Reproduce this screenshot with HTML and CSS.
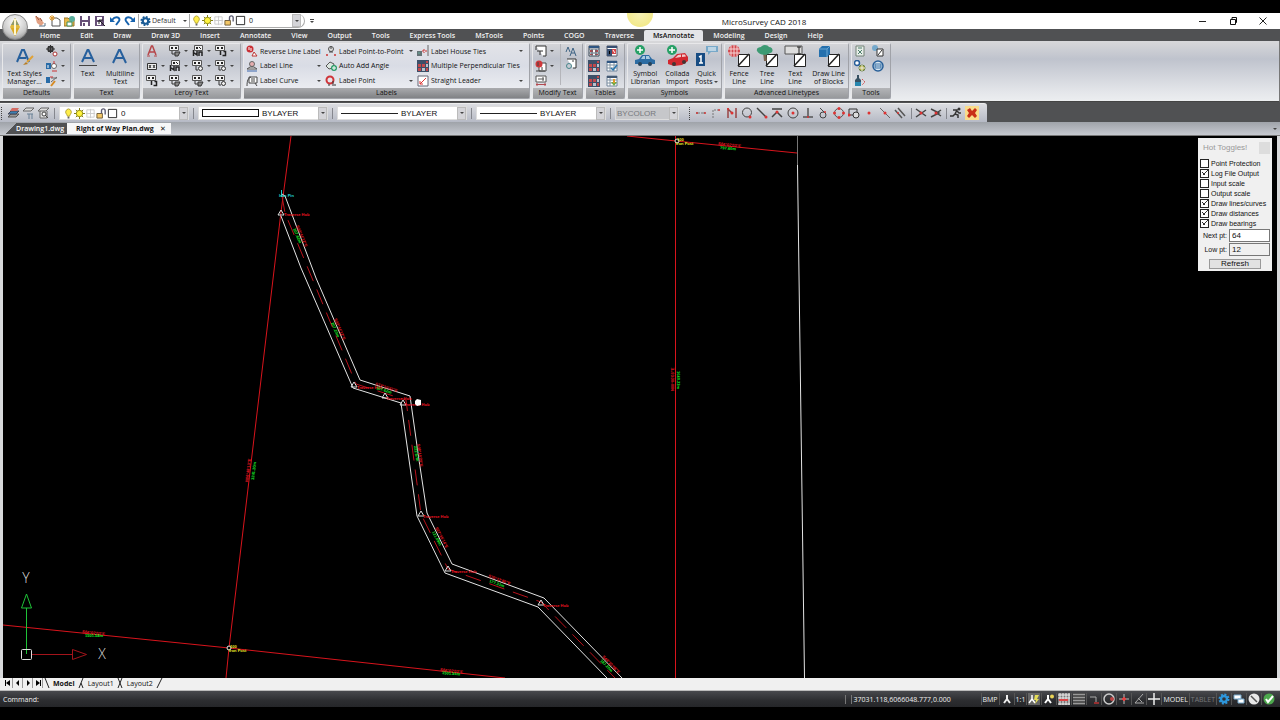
FILE: index.html
```html
<!DOCTYPE html>
<html lang="en">
<head>
  <meta charset="UTF-8" />
  <meta name="viewport" content="width=device-width, initial-scale=1.0"/>
  <title>MicroSurvey CAD 2018</title>
  <link rel="stylesheet" href="styles.css">
</head>
<body>
  <!-- Icon sprite -->
  <svg class="sprite" width="0" height="0">
    <symbol id="hand" viewBox="0 0 12 12"><path d="M1 1l5 2 4 5-3 3-4-3z" fill="#e2a184"/><path d="M2 1l3 4M6 3l2 3" stroke="#9c543b" fill="none"/><path d="M5 11h6V8" stroke="#5a7286" fill="none"/></symbol>
    <symbol id="new" viewBox="0 0 12 12"><path d="M3 3h5l3 2v6H3z" fill="#fff" stroke="#555"/><path d="M0 3h6M3 0v6M1 1l4 4M5 1L1 5" stroke="#e09a2b"/></symbol>
    <symbol id="open" viewBox="0 0 12 12"><path d="M0 3h4l1 1h5v7H0z" fill="#e8b94a" stroke="#98742b"/><circle cx="8" cy="4" r="3" fill="#58ad9b"/><path d="M3 7h5v4H3z" fill="#fff" stroke="#3c8e60"/></symbol>
    <symbol id="save" viewBox="0 0 12 12"><path d="M1 1h10v10H1z" fill="#675078"/><path d="M3 1h6v4H3zM3 7h6v4H3z" fill="#fff"/><path d="M4 8h2v3H4z" fill="#675078"/></symbol>
    <symbol id="saveas" viewBox="0 0 12 12"><path d="M1 1h9v10H1z" fill="#675078"/><path d="M3 2h5v3H3zM3 7h4v3H3z" fill="#fff"/><path d="M5 5l6 6M5 5v4M5 5h4" stroke="#222"/></symbol>
    <symbol id="undo" viewBox="0 0 12 12"><path d="M1 2v5h5z" fill="#1763ae"/><path d="M3 5c4-5 9-2 7 1L7 10" fill="none" stroke="#1763ae" stroke-width="2"/></symbol>
    <symbol id="redo" viewBox="0 0 12 12"><path d="M11 2v5H6z" fill="#1763ae"/><path d="M9 5C5 0 0 3 2 6l3 4" fill="none" stroke="#1763ae" stroke-width="2"/></symbol>
    <symbol id="gear" viewBox="0 0 12 12"><circle cx="6" cy="6" r="4.5" fill="none" stroke="currentColor" stroke-width="2" stroke-dasharray="2 1.5"/><circle cx="6" cy="6" r="3" fill="none" stroke="currentColor" stroke-width="2.4"/></symbol>
    <symbol id="bulb" viewBox="0 0 12 12"><path d="M6 1a3.5 3.5 0 0 0-2 6l1 2h2l1-2a3.5 3.5 0 0 0-2-6z" fill="#ffee4a" stroke="#b0a030"/><path d="M5 9.5h2v2H5z" fill="#666"/></symbol>
    <symbol id="sun" viewBox="0 0 12 12"><path d="M6 0v12M0 6h12M2 2l8 8M10 2l-8 8" stroke="#77740a"/><circle cx="6" cy="6" r="3.5" fill="#fff33d" stroke="#88830e"/></symbol>
    <symbol id="freeze" viewBox="0 0 12 12"><path d="M2 2h8v8H2zM6 1v10M1 6h10" fill="none" stroke="#ccc"/></symbol>
    <symbol id="lock" viewBox="0 0 12 12"><path d="M1 6h6v5H1z" fill="#f3c767" stroke="#6c5a35"/><path d="M6 6V3a2 2 0 0 1 4 0v4" fill="none" stroke="#5c5c72" stroke-width="1.5"/></symbol>
    <symbol id="box" viewBox="0 0 12 12"><path d="M1.5 1.5h9v9h-9z" fill="#fff" stroke="#222"/></symbol>

    <symbol id="bigA" viewBox="0 0 18 18"><path d="M2 15L8 2h1l6 13M5 10h7" fill="none" stroke="#27609d" stroke-width="2"/></symbol>
    <symbol id="bigAu" viewBox="0 0 18 18"><path d="M3 14L8.5 2h1L15 14M5 10h8" fill="none" stroke="#27609d" stroke-width="2"/><path d="M0 17.5h18" stroke="#444"/></symbol>
    <symbol id="styleA" viewBox="0 0 18 18"><path d="M1 14L6 2h2l5 12M3 10h7" fill="none" stroke="#27609d" stroke-width="2"/><path d="M17 8l-6 6" stroke="#e1a235" stroke-width="2"/><path d="M7 17l3-3 2 2z" fill="#b67c25"/></symbol>
    <symbol id="redA" viewBox="0 0 12 12"><path d="M2 10L5.5 1h1L10 10M3 7h6" fill="none" stroke="#b64649" stroke-width="1.5"/><path d="M1 11h3M8 11h3" stroke="#b64649"/></symbol>
    <symbol id="gearTag" viewBox="0 0 12 12"><circle cx="4.500" cy="4" r="2.5" fill="none" stroke="#333" stroke-width="1.5"/><path d="M4.5 0v8M0 4h9M2 1l5 6M7 1L2 7" stroke="#333"/><circle cx="9" cy="9" r="2" fill="#fff" stroke="#a33"/></symbol>
    <symbol id="tagLabel" viewBox="0 0 12 12"><path d="M0 3h5v6H0z" fill="#286ba7"/><path d="M2 5v3" stroke="#fff"/><circle cx="8" cy="6" r="2.5" fill="#fff" stroke="#666"/><path d="M8 1v3M6 11h5" stroke="#c33"/></symbol>
    <symbol id="tagLeader" viewBox="0 0 12 12"><path d="M0 2h4v6H0z" fill="#286ba7"/><path d="M5 3h6M5 7l6-5" stroke="#666"/><path d="M5 11l4-5" stroke="#d68a22" stroke-width="2"/><path d="M4 2h3" stroke="#c33"/></symbol>
    <symbol id="strip" viewBox="0 0 12 12"><path d="M1.500 3.500h9v6h-9z" fill="#eee" stroke="#333"/><path d="M3 5l2 3M5 5L3 8M7 5l2 3M9 5L7 8" fill="none" stroke="#333"/></symbol>
    <!-- lettering templates -->
    <symbol id="leroyA" viewBox="0 0 12 12"><path d="M.5.5h9v5h-9z" fill="#f2f2f2" stroke="#555"/><path d="M2 2l2 2M4 2L2 4M6 2l2 2M8 2L6 4" stroke="#222"/><path d="M3 6v3h3" fill="none" stroke="#333"/><path d="M6 7h5l-2 4H6z" fill="#888" stroke="#333"/></symbol>
    <symbol id="leroyB" viewBox="0 0 12 12"><path d="M2.500.5h8v5h-8z" fill="#f2f2f2" stroke="#555"/><path d="M4 2l2 2M6 2L4 4M7 2l2 2" stroke="#222"/><path d="M1.500 11V5M1 7l4 3V6M7 11V7h3v4" fill="none" stroke="#222" stroke-width="1.5"/></symbol>
    <symbol id="leroyC" viewBox="0 0 12 12"><path d="M.5.5h9v5h-9z" fill="#f2f2f2" stroke="#555"/><path d="M2 2l2 2M4 2L2 4M6 2l2 2M8 2L6 4" stroke="#222"/><path d="M4 6v4h2" fill="none" stroke="#333"/><circle cx="8.500" cy="8.500" r="2" fill="#eee" stroke="#333"/></symbol>
    <symbol id="leroyD" viewBox="0 0 12 12"><path d="M.5.5h9v5h-9z" fill="#f2f2f2" stroke="#555"/><path d="M2 2l2 2M4 2L2 4M6 2l2 2M8 2L6 4" stroke="#222"/><path d="M5.500 6v4M8.500 6.500h2v4h-3" fill="none" stroke="#222" stroke-width="1.5"/></symbol>

    <symbol id="revLabel" viewBox="0 0 12 12"><circle cx="4" cy="4" r="3.5" fill="#c92f35"/><path d="M3 2v3M5 3v3" stroke="#fff"/><path d="M8 7l3 4H6z" fill="#fff" stroke="#b33"/></symbol>
    <symbol id="lineLabel" viewBox="0 0 12 12"><circle cx="6" cy="4" r="2.5" fill="#e6aeb0" stroke="#666"/><path d="M1 9l3-2h4l3 2z" fill="#eee" stroke="#555"/><path d="M1 11h10" stroke="#3f69ad"/></symbol>
    <symbol id="curveLabel" viewBox="0 0 12 12"><path d="M3 2h8v6H3z" fill="#fff" stroke="#444"/><path d="M1 11c0-5 1-8 4-9M9 8l2 3M5 4h4M5 6h4" fill="none" stroke="#444"/></symbol>
    <symbol id="p2p" viewBox="0 0 12 12"><circle cx="6" cy="4" r="2.5" fill="#ddd" stroke="#555"/><path d="M6 1v3M4 7h4" stroke="#444"/><circle cx="2" cy="10" r="1" fill="#c33"/><circle cx="10" cy="10" r="1" fill="#c33"/></symbol>
    <symbol id="autoAngle" viewBox="0 0 12 12"><path d="M1 6l4-4 4 2-1 4-4 1z" fill="#dce7e1" stroke="#555"/><circle cx="9" cy="8" r="3" fill="#2a9c68"/><path d="M7 8h4M9 6v4" stroke="#fff"/></symbol>
    <symbol id="labelPoint" viewBox="0 0 12 12"><circle cx="5" cy="5" r="3.5" fill="none" stroke="#cf3439" stroke-width="2"/><path d="M8 6v5M3 10h2M10 9v2" stroke="#333"/></symbol>
    <symbol id="house" viewBox="0 0 12 12"><path d="M0 6h5v5H0z" fill="#657476"/><path d="M1 8h2" stroke="#62a998"/><path d="M5 6h5M7 4v4" stroke="#c33" stroke-dasharray="2 1"/><path d="M11 0v11" stroke="#666"/></symbol>
    <symbol id="grid" viewBox="0 0 12 12"><path d="M1 1h10v10H1z" fill="#fff" stroke="#384654"/><path d="M1 2h10" stroke="#2e5582" stroke-width="2"/><path d="M2 5h3v2H2zM7 5h3v2H7zM2 9h3v1H2zM7 9h3v1H7z" fill="#b8464a"/><path d="M1 4h10M1 8h10M4 4v7M8 4v7" stroke="#576472"/></symbol>
    <symbol id="gridFull" viewBox="0 0 12 12"><path d="M0 0h12v12H0z" fill="#3c4f68"/><path d="M1 4h3v3H1zM5 4h3v3H5zM9 8h2v3H9zM1 8h3v3H1zM9 1h2v2H9z" fill="#c2484c"/><path d="M5 8h3v3H5zM9 4h2v3H9z" fill="#b9c1cb"/></symbol>
    <symbol id="gridBlue" viewBox="0 0 12 12"><path d="M1 1h10v10H1z" fill="#fff" stroke="#70849a"/><path d="M1 2h10" stroke="#2e5582" stroke-width="2"/><path d="M1 5h10M1 8h10M4 3v8M8 3v8" stroke="#8093a3"/><path d="M5 8l2 2 4-5" fill="none" stroke="#2874ad" stroke-width="1.5"/></symbol>
    <symbol id="gridRed" viewBox="0 0 12 12"><path d="M1 1h10v10H1z" fill="#fff" stroke="#525968"/><path d="M1 2h10M2 5h3v5H2z" stroke="#384f71" stroke-width="2"/><path d="M6 4h4v5H6z" fill="#d44649"/><path d="M7 5l2 3" stroke="#fff"/></symbol>
    <symbol id="gridPen" viewBox="0 0 12 12"><path d="M1 1h10v10H1z" fill="#fff" stroke="#70849a"/><path d="M1 2h10" stroke="#435872" stroke-width="2"/><path d="M1 5h10M1 8h10M4 3v8" stroke="#8093a3"/><path d="M5 7h6l-3 4z" fill="#71a949"/><path d="M8 4v4" stroke="#e0982b" stroke-width="2"/></symbol>
    <symbol id="straight" viewBox="0 0 12 12"><path d="M1 1h10v10H1z" fill="#fff" stroke="#667"/><path d="M3 9l6-6M3 9V6M3 9h3" stroke="#d33" fill="none"/></symbol>
    <symbol id="textBox" viewBox="0 0 12 12"><path d="M1 1h10v10H8" fill="#fff" stroke="#333"/><path d="M1 1v4M2 6h6M5 6v4" stroke="#333"/></symbol>
    <symbol id="noText" viewBox="0 0 12 12"><path d="M4 3h7v8H4z" fill="#fff" stroke="#444"/><circle cx="4" cy="4" r="3.5" fill="#cf383b"/><path d="M3 2v4M7 7v3M1 11h9" stroke="#444"/></symbol>
    <symbol id="fitText" viewBox="0 0 12 12"><path d="M1 1h10v6H1z" fill="#fff" stroke="#555"/><path d="M3 4h6M8 2v4" stroke="#555"/><path d="M1 9.5h10M2 8v3M10 8v3" stroke="#b34b51"/></symbol>
    <symbol id="twoA" viewBox="0 0 12 12"><path d="M1 7l2-5 2 5M5 11l3-8 3 8M6 8h4" fill="none" stroke="#3e6384"/></symbol>
    <symbol id="rotText" viewBox="0 0 12 12"><path d="M2 1h9v9H8" fill="#fff" stroke="#333"/><circle cx="4" cy="8" r="2.5" fill="none" stroke="#46858a"/><path d="M7 3h2" stroke="#444"/></symbol>

    <symbol id="plusCar" viewBox="0 0 22 22"><circle cx="6" cy="5" r="5" fill="#27a066"/><path d="M3 5h6M6 2v6" stroke="#fff" stroke-width="1.5"/><path d="M1 15l4-1 3-4h7l3 4 3 1v4H1z" fill="#2c6ca3"/><path d="M7 14l2-3h2v3M12 11h3l1 3h-4z" fill="#a9cbe2"/><circle cx="6" cy="19" r="2" fill="#27435a"/><circle cx="16" cy="19" r="2" fill="#27435a"/></symbol>
    <symbol id="plusRed" viewBox="0 0 22 22"><circle cx="6" cy="5" r="5" fill="#27a066"/><path d="M3 5h6M6 2v6" stroke="#fff" stroke-width="1.5"/><path d="M2 15l5-2 4-4 8-1 3 4v4l-6 4-8 1-6-2z" fill="#d2272f"/><path d="M9 13l3-3 3-.5V12zM16 9.500l3 0 1 2-4 .5z" fill="#f0c9cb"/><circle cx="8" cy="19" r="2" fill="#433"/><circle cx="18" cy="17" r="2" fill="#433"/></symbol>
    <symbol id="posts" viewBox="0 0 22 22"><path d="M0 8h9v13H0z" fill="#174c83"/><path d="M3 12l2-1v7M3 18h4" stroke="#fff" stroke-width="1.5" fill="none"/><path d="M10 1h12v6h-7l-3 3V7h-2z" fill="#78a9c9"/><path d="M12 3h8M12 5h8" stroke="#fff"/></symbol>
    <symbol id="fence" viewBox="0 0 22 22"><path d="M10.500 9.500h11v12h-11z" fill="#fff" stroke="#222"/><path d="M10 21L21 9" stroke="#222" stroke-width="1.5"/><circle cx="6" cy="6" r="6" fill="#d2474c"/><path d="M3 1v10M6 0v12M9 1v10M0 4h12M0 8h12" stroke="#f5d5d5"/></symbol>
    <symbol id="tree" viewBox="0 0 22 22"><path d="M10.500 9.500h11v12h-11z" fill="#fff" stroke="#222"/><path d="M10 21L21 9" stroke="#222" stroke-width="1.5"/><path d="M7 7l1 9h3l-1-9z" fill="#7b6451"/><path d="M1 6c-1-3 2-4 4-4 2-3 7-2 8 0 4 0 5 5 1 6-4 3-11 2-13-2z" fill="#3d9a73"/></symbol>
    <symbol id="textline" viewBox="0 0 22 22"><path d="M10.500 9.500h11v12h-11z" fill="#fff" stroke="#222"/><path d="M10 21L21 9" stroke="#222" stroke-width="1.5"/><path d="M1 1h17v8H1z" fill="#ddd" stroke="#555"/><path d="M15 2v7M13 2h4M13 9h4" stroke="#222"/></symbol>
    <symbol id="block" viewBox="0 0 22 22"><path d="M10.500 9.500h11v12h-11z" fill="#fff" stroke="#222"/><path d="M10 21L21 9" stroke="#222" stroke-width="1.5"/><path d="M1 4l3-3h8v8l-3 3H1z" fill="#2470ae"/><path d="M1 4h8v8M9 4l3-3" fill="none" stroke="#67a6d3"/></symbol>
    <symbol id="sheet" viewBox="0 0 12 12"><path d="M2 1h8v10H2z" fill="#e8eee9" stroke="#728276"/><path d="M4 3h4M4 5l4 4M8 5L4 9" stroke="#4d7f6c"/></symbol>
    <symbol id="convert" viewBox="0 0 12 12"><circle cx="3" cy="3" r="3" fill="#75a9cc"/><path d="M5 4h6v7H5z" fill="#fff" stroke="#333"/><path d="M6 10l4-5" stroke="#333"/></symbol>
    <symbol id="worlds" viewBox="0 0 12 12"><circle cx="3" cy="3" r="2.5" fill="#fff" stroke="#265d98" stroke-width="1.5"/><circle cx="8" cy="8" r="3" fill="#b2ad4d" stroke="#678041"/><path d="M5 8h6M8 5v6" stroke="#eed"/></symbol>
    <symbol id="badge" viewBox="0 0 12 12"><circle cx="6" cy="6" r="5" fill="#d9e7f2" stroke="#285f98" stroke-width="1.5"/><path d="M3 4h6v4H3zM3 6h6" fill="none" stroke="#3b73a7"/></symbol>
    <symbol id="bottle" viewBox="0 0 12 12"><path d="M3 0h2v3l2 2v6H1V5l2-2z" fill="#375061"/><path d="M1 7h6v4H1z" fill="#2787af"/><path d="M8 4l3 3-3 3" fill="none" stroke="#cd5051" stroke-dasharray="2 1"/></symbol>

    <symbol id="layers" viewBox="0 0 12 12"><path d="M1 10l3-3h8l-3 3z" fill="#999" stroke="#555"/><path d="M1 7l3-3h8L9 7z" fill="#3f7fb0" stroke="#445"/><path d="M5 1h7l-2 3H3z" fill="#d36d65"/></symbol>
    <symbol id="layerT" viewBox="0 0 12 12"><path d="M1 4l3-3h8L9 4z" fill="#ddd" stroke="#666"/><path d="M5 7h6M7 7v5M10 7v5" stroke="#688096"/></symbol>
    <symbol id="layerFind" viewBox="0 0 12 12"><path d="M1 4l3-3h8L9 4zM3 4v7h7V4" fill="#ddd" stroke="#666"/><circle cx="7" cy="7" r="2" fill="#fff" stroke="#444"/><path d="M8 8l3 3" stroke="#444"/></symbol>

    <!-- entity snaps -->
    <symbol id="s-dash" viewBox="0 0 12 12"><path d="M1 6h10" stroke="#777" stroke-dasharray="4 1"/><circle cx="2" cy="6" r="1" fill="#c33"/><circle cx="10" cy="6" r="1" fill="#c33"/></symbol>
    <symbol id="s-from" viewBox="0 0 12 12"><path d="M3 11V3h5" fill="none" stroke="#777" stroke-dasharray="2 1"/><circle cx="9" cy="3" r="1" fill="#c33"/></symbol>
    <symbol id="s-end" viewBox="0 0 12 12"><path d="M2 1v10M10 1v10M2 2l4 4" stroke="#944" stroke-width="1.5" fill="none"/><circle cx="6" cy="6" r="1.5" fill="#d33"/><circle cx="2" cy="2" r="1" fill="#d33"/></symbol>
    <symbol id="s-circle" viewBox="0 0 12 12"><circle cx="6" cy="5.5" r="4.5" fill="none" stroke="#444"/><circle cx="9" cy="10" r="1.5" fill="#d33"/></symbol>
    <symbol id="s-line" viewBox="0 0 12 12"><path d="M1 1l9 9" stroke="#444" stroke-width="1.5"/><circle cx="10" cy="10" r="1.5" fill="#d33"/></symbol>
    <symbol id="s-int" viewBox="0 0 12 12"><path d="M1 2h10M1 10l5-5 5 5" fill="none" stroke="#444" stroke-width="1.5"/><circle cx="6" cy="5" r="1.5" fill="#d33"/></symbol>
    <symbol id="s-center" viewBox="0 0 12 12"><circle cx="6" cy="6" r="5" fill="none" stroke="#444"/><circle cx="6" cy="6" r="1.5" fill="#d33"/></symbol>
    <symbol id="s-perp" viewBox="0 0 12 12"><path d="M6 1v9M1 10h10" stroke="#555" stroke-width="1.5"/><circle cx="6" cy="10" r="1" fill="#d33"/></symbol>
    <symbol id="s-tan" viewBox="0 0 12 12"><circle cx="6" cy="8" r="3" fill="none" stroke="#444"/><path d="M3 1l5 5" stroke="#444"/><circle cx="8" cy="5" r="1" fill="#d33"/></symbol>
    <symbol id="s-quad" viewBox="0 0 12 12"><circle cx="6" cy="6" r="4.5" fill="none" stroke="#555"/><circle cx="6" cy="1.5" r="1.5" fill="#d33"/><circle cx="1.5" cy="6" r="1.5" fill="#d33"/><circle cx="10.5" cy="6" r="1.5" fill="#d33"/><circle cx="6" cy="10.5" r="1.5" fill="#d33"/></symbol>
    <symbol id="s-ins" viewBox="0 0 12 12"><path d="M1 2h8v6H1z" fill="none" stroke="#333"/><circle cx="8" cy="8" r="3" fill="#ddd" stroke="#333"/><circle cx="1" cy="8" r="1.5" fill="#d33"/></symbol>
    <symbol id="s-dot" viewBox="0 0 12 12"><circle cx="6" cy="6" r="1.5" fill="#d33"/></symbol>
    <symbol id="s-near" viewBox="0 0 12 12"><path d="M1 1l10 10" stroke="#666"/><circle cx="6" cy="6" r="1.5" fill="#d33"/></symbol>
    <symbol id="s-par" viewBox="0 0 12 12"><path d="M1 3l7 8M4 1l7 8" stroke="#555" stroke-width="1.5"/><circle cx="4" cy="6" r="1" fill="#d33"/></symbol>
    <symbol id="s-x" viewBox="0 0 12 12"><path d="M1 2l10 7M1 10l10-7" stroke="#444" stroke-width="1.5"/><circle cx="6" cy="6" r="1.5" fill="#d33"/></symbol>
    <symbol id="s-app" viewBox="0 0 12 12"><path d="M1 2l8 4-8 4M8 5l3-2M8 7l3 2" stroke="#444" fill="none" stroke-width="1.5"/><circle cx="6" cy="6" r="1.5" fill="#d33"/></symbol>
    <symbol id="s-run" viewBox="0 0 12 12"><circle cx="9" cy="2" r="1.5" fill="#333"/><path d="M3 3h4l-2 4 3 1v3M5 7l-2 2H0M7 4l2 2h2" fill="none" stroke="#333" stroke-width="1.5"/></symbol>
    <symbol id="s-off" viewBox="0 0 12 12"><path d="M1 3l3-2 2 3 3-3 2 2-2 3 2 3-2 2-3-3-3 3-2-2 2-3z" fill="#c92e18"/></symbol>

    <!-- status bar -->
    <symbol id="b-man" viewBox="0 0 12 12"><path d="M6 2v4l-3 4M6 6l3 4" fill="none" stroke="#eee" stroke-width="2"/></symbol>
    <symbol id="b-ann" viewBox="0 0 12 12"><path d="M0 0h12v12H0z" fill="#666"/><path d="M4 2v4l-3 4M4 6l3 4" fill="none" stroke="#fff" stroke-width="1.5"/><path d="M7 2h4l-2 4h2l-4 5 1-4H6z" fill="#e5dd55"/></symbol>
    <symbol id="b-star" viewBox="0 0 12 12"><path d="M5 2v4l-3 4M5 6l3 4" fill="none" stroke="#fff" stroke-width="2"/><circle cx="9" cy="3.500" r="2" fill="#ead357"/></symbol>
    <symbol id="b-snap" viewBox="0 0 12 12"><path d="M0 0h12v12H0z" fill="#777"/><path d="M2 0v12M5 0v12M8 0v12M11 0v12M0 2h12M0 5h12M0 11h12" stroke="#eee"/><path d="M1 7h9" stroke="#d44" stroke-width="2"/></symbol>
    <symbol id="b-grid" viewBox="0 0 12 12"><path d="M0 0h12v12H0z" fill="#555"/><path d="M0 1.5h12M0 4.5h12M0 7.5h12M0 10.5h12" stroke="#999"/></symbol>
    <symbol id="b-ortho" viewBox="0 0 12 12"><path d="M2 4h6v5" fill="none" stroke="#aaa"/><path d="M6 10h5" stroke="#b33" stroke-width="1.5"/></symbol>
    <symbol id="b-polar" viewBox="0 0 12 12"><circle cx="6" cy="6" r="5" fill="none" stroke="#ccc" stroke-width="1.5"/><circle cx="9" cy="6" r="2" fill="#b44"/></symbol>
    <symbol id="b-esnap" viewBox="0 0 12 12"><path d="M6 1v10M1 6h10" stroke="#bbb"/><path d="M4 6h4M6 4v4" stroke="#d44" stroke-width="2"/></symbol>
    <symbol id="b-track" viewBox="0 0 12 12"><path d="M10 1L2 10h9M5 5l4 4" fill="none" stroke="#aaa"/></symbol>
    <symbol id="b-cross" viewBox="0 0 12 12"><path d="M6 0v12M0 6h12" stroke="#eee" stroke-width="1.5"/></symbol>
    <symbol id="b-win" viewBox="0 0 12 12"><path d="M1 2h7v4H1zM5 6h6v4H5z" fill="#fff" stroke="#77a9cc"/></symbol>
    <symbol id="b-clock" viewBox="0 0 12 12"><circle cx="6" cy="6" r="5.5" fill="#e8e8e8"/><path d="M3 3l6 6" stroke="#555" stroke-width="1.5"/></symbol>
    <symbol id="b-ok" viewBox="0 0 12 12"><circle cx="6" cy="6" r="5.5" fill="#4da84d"/><path d="M3 6l2 3 5-6" fill="none" stroke="#fff" stroke-width="2"/></symbol>
  </svg>

  <div class="app">
    <header class="titlebar">
      <button class="orb" aria-label="Menu">
        <svg viewBox="0 0 24 24"><path d="M12 3l5 9-5 9-5-9z" fill="#e0b93c"/><path d="M12 3l4 7H8z" fill="#8f9a6c"/><path d="M8 13h8l-4 8z" fill="#d9a927"/><path d="M12 4v16" stroke="#fff7cc" stroke-width="2"/></svg>
      </button>
      <div class="quick">
        <button><svg class="icon"><use href="#hand"/></svg></button>
        <button><svg class="icon"><use href="#new"/></svg></button>
        <button><svg class="icon"><use href="#open"/></svg></button>
        <button><svg class="icon"><use href="#save"/></svg></button>
        <button><svg class="icon"><use href="#saveas"/></svg></button>
        <button><svg class="icon"><use href="#undo"/></svg></button>
        <button><svg class="icon"><use href="#redo"/></svg></button>
      </div>
      <label class="workspace"><svg class="icon"><use href="#gear"/></svg><select><option>Default</option></select><i class="drop"></i></label>
      <label class="layer-pick">
        <svg class="icon"><use href="#bulb"/></svg><svg class="icon"><use href="#sun"/></svg><svg class="icon"><use href="#freeze"/></svg><svg class="icon"><use href="#lock"/></svg><svg class="icon"><use href="#box"/></svg>
        <select><option>0</option></select><span class="arrow"><i class="drop"></i></span>
      </label>
      <button class="more" aria-label="More"><i class="drop"></i></button>
      <h1>MicroSurvey CAD 2018</h1>
      <span class="halo"></span>
      <div class="window-buttons">
        <button aria-label="Minimize"><svg viewBox="0 0 10 10"><path d="M1 5.5h7" stroke="#222"/></svg></button>
        <button aria-label="Restore"><svg viewBox="0 0 10 10"><path d="M2.5 3.5h5v5h-5zM4 3V1.500h4.500v5H8" fill="none" stroke="#111"/></svg></button>
        <button aria-label="Close"><svg viewBox="0 0 10 10"><path d="M1.5 1.5l7 7M8.5 1.5l-7 7" stroke="#222"/></svg></button>
      </div>
    </header>

    <nav class="tabs">
      <button>Home</button><button>Edit</button><button>Draw</button><button>Draw 3D</button><button>Insert</button><button>Annotate</button><button>View</button><button>Output</button><button>Tools</button><button>Express Tools</button><button>MsTools</button><button>Points</button><button>COGO</button><button>Traverse</button><button class="active">MsAnnotate</button><button>Modeling</button><button>Design</button><button>Help</button>
    </nav>

    <div class="ribbon">
      <section class="panel defaults">
        <div class="tools">
          <button class="big"><svg><use href="#styleA"/></svg><span>Text Styles<br>Manager...</span></button>
          <div class="small-grid">
            <button><svg class="icon"><use href="#gearTag"/></svg><i class="drop"></i></button>
            <button><svg class="icon"><use href="#tagLabel"/></svg><i class="drop"></i></button>
            <button><svg class="icon"><use href="#tagLeader"/></svg><i class="drop"></i></button>
          </div>
        </div>
        <h2>Defaults</h2>
      </section>
      <section class="panel text">
        <div class="tools">
          <button class="big"><svg><use href="#bigAu"/></svg><span>Text</span></button>
          <button class="big"><svg><use href="#bigA"/></svg><span>Multiline<br>Text</span></button>
        </div>
        <h2>Text</h2>
      </section>
      <section class="panel leroy">
        <div class="tools">
          <div class="small-grid">
            <button><svg class="icon"><use href="#redA"/></svg></button>
            <button><svg class="icon"><use href="#leroyA"/></svg><i class="drop"></i></button>
            <button><svg class="icon"><use href="#leroyB"/></svg><i class="drop"></i></button>
            <button><svg class="icon"><use href="#leroyD"/></svg><i class="drop"></i></button>
            <button><svg class="icon"><use href="#strip"/></svg><i class="drop"></i></button>
            <button><svg class="icon"><use href="#leroyB"/></svg><i class="drop"></i></button>
            <button><svg class="icon"><use href="#leroyC"/></svg><i class="drop"></i></button>
            <button><svg class="icon"><use href="#leroyC"/></svg><i class="drop"></i></button>
            <button><svg class="icon"><use href="#leroyD"/></svg><i class="drop"></i></button>
            <button><svg class="icon"><use href="#leroyA"/></svg><i class="drop"></i></button>
            <button><svg class="icon"><use href="#leroyA"/></svg><i class="drop"></i></button>
            <button><svg class="icon"><use href="#leroyC"/></svg><i class="drop"></i></button>
          </div>
        </div>
        <h2>Leroy Text</h2>
      </section>
      <section class="panel labels">
        <div class="tools">
          <div class="small-grid">
            <button><svg class="icon"><use href="#revLabel"/></svg>Reverse Line Label</button>
            <button><svg class="icon"><use href="#p2p"/></svg>Label Point-to-Point<i class="drop"></i></button>
            <button><svg class="icon"><use href="#house"/></svg>Label House Ties<i class="drop"></i></button>
            <button><svg class="icon"><use href="#lineLabel"/></svg>Label Line<i class="drop"></i></button>
            <button><svg class="icon"><use href="#autoAngle"/></svg>Auto Add Angle</button>
            <button><svg class="icon"><use href="#gridFull"/></svg>Multiple Perpendicular Ties</button>
            <button><svg class="icon"><use href="#curveLabel"/></svg>Label Curve<i class="drop"></i></button>
            <button><svg class="icon"><use href="#labelPoint"/></svg>Label Point<i class="drop"></i></button>
            <button><svg class="icon"><use href="#straight"/></svg>Straight Leader<i class="drop"></i></button>
          </div>
        </div>
        <h2>Labels</h2>
      </section>
      <section class="panel modify">
        <div class="tools">
          <div class="small-grid">
            <button><svg class="icon"><use href="#textBox"/></svg><i class="drop"></i></button>
            <button><svg class="icon"><use href="#noText"/></svg><i class="drop"></i></button>
            <button><svg class="icon"><use href="#fitText"/></svg></button>
          </div>
          <div class="small-grid second">
            <button><svg class="icon"><use href="#twoA"/></svg></button>
            <button><svg class="icon"><use href="#rotText"/></svg></button>
          </div>
        </div>
        <h2>Modify Text</h2>
      </section>
      <section class="panel tables">
        <div class="tools">
          <div class="small-grid">
            <button><svg class="icon"><use href="#grid"/></svg></button>
            <button><svg class="icon"><use href="#gridRed"/></svg></button>
            <button><svg class="icon"><use href="#gridFull"/></svg></button>
            <button><svg class="icon"><use href="#gridBlue"/></svg></button>
            <button><svg class="icon"><use href="#gridFull"/></svg></button>
            <button><svg class="icon"><use href="#gridPen"/></svg></button>
          </div>
        </div>
        <h2>Tables</h2>
      </section>
      <section class="panel symbols">
        <div class="tools">
          <button class="big"><svg><use href="#plusCar"/></svg><span>Symbol<br>Librarian</span></button>
          <button class="big"><svg><use href="#plusRed"/></svg><span>Collada<br>Import</span></button>
          <button class="big"><svg><use href="#posts"/></svg><span>Quick<br>Posts <i class="drop"></i></span></button>
        </div>
        <h2>Symbols</h2>
      </section>
      <section class="panel linetypes">
        <div class="tools">
          <button class="big"><svg><use href="#fence"/></svg><span>Fence<br>Line</span></button>
          <button class="big"><svg><use href="#tree"/></svg><span>Tree<br>Line</span></button>
          <button class="big"><svg><use href="#textline"/></svg><span>Text<br>Line</span></button>
          <button class="big"><svg><use href="#block"/></svg><span>Draw Line<br>of Blocks</span></button>
        </div>
        <h2>Advanced Linetypes</h2>
      </section>
      <section class="panel tables">
        <div class="tools">
          <div class="small-grid">
            <button><svg class="icon"><use href="#sheet"/></svg></button>
            <button><svg class="icon"><use href="#convert"/></svg></button>
            <button><svg class="icon"><use href="#worlds"/></svg></button>
            <button><svg class="icon"><use href="#badge"/></svg></button>
            <button><svg class="icon"><use href="#bottle"/></svg></button>
          </div>
        </div>
        <h2>Tools</h2>
      </section>
    </div>

    <div class="toolrow">
      <div class="toolbar">
        <i class="grip"></i>
        <div class="layer-tools">
          <button><svg class="icon"><use href="#layers"/></svg></button>
          <button><svg class="icon"><use href="#layerT"/></svg></button>
          <button><svg class="icon"><use href="#layerFind"/></svg></button>
        </div>
        <i class="sep"></i>
        <label class="combo">
          <svg class="icon"><use href="#bulb"/></svg><svg class="icon"><use href="#sun"/></svg><svg class="icon"><use href="#freeze"/></svg><svg class="icon"><use href="#lock"/></svg><svg class="icon"><use href="#box"/></svg>
          <select><option>0</option></select><span class="arrow"><i class="drop"></i></span>
        </label>
        <i class="sep"></i>
        <label class="combo"><i class="swatch"></i><select><option>BYLAYER</option></select><span class="arrow"><i class="drop"></i></span></label>
        <i class="sep"></i>
        <label class="combo"><i class="rule"></i><select><option>BYLAYER</option></select><span class="arrow"><i class="drop"></i></span></label>
        <i class="sep"></i>
        <label class="combo"><i class="rule"></i><select><option>BYLAYER</option></select><span class="arrow"><i class="drop"></i></span></label>
        <i class="sep"></i>
        <label class="combo off"><select disabled><option>BYCOLOR</option></select><span class="arrow"><i class="drop"></i></span></label>
        <i class="grip second"></i>
        <div class="snaps">
          <button><svg class="icon"><use href="#s-dash"/></svg></button>
          <button><svg class="icon"><use href="#s-from"/></svg></button>
          <button><svg class="icon"><use href="#s-end"/></svg></button>
          <button><svg class="icon"><use href="#s-circle"/></svg></button>
          <button><svg class="icon"><use href="#s-line"/></svg></button>
          <button><svg class="icon"><use href="#s-int"/></svg></button>
          <button><svg class="icon"><use href="#s-center"/></svg></button>
          <button><svg class="icon"><use href="#s-perp"/></svg></button>
          <button><svg class="icon"><use href="#s-tan"/></svg></button>
          <button><svg class="icon"><use href="#s-quad"/></svg></button>
          <button><svg class="icon"><use href="#s-ins"/></svg></button>
          <button><svg class="icon"><use href="#s-dot"/></svg></button>
          <button><svg class="icon"><use href="#s-near"/></svg></button>
          <button><svg class="icon"><use href="#s-par"/></svg></button>
        </div>
        <div class="snap-modes">
          <i class="sep"></i>
          <button><svg class="icon"><use href="#s-x"/></svg></button>
          <button><svg class="icon"><use href="#s-app"/></svg></button>
          <i class="sep"></i>
          <button><svg class="icon"><use href="#s-run"/></svg></button>
          <button class="lit"><svg class="icon"><use href="#s-off"/></svg></button>
        </div>
      </div>
    </div>

    <div class="docs">
      <button class="doc">Drawing1.dwg</button>
      <button class="doc current">Right of Way Plan.dwg<span>✕</span></button>
      <button class="docs-menu" aria-label="Documents"><i class="drop"></i></button>
    </div>

    <main class="canvas">
      <svg class="drawing">
        <g transform="translate(-3 -136)">
          <!-- property lines -->
          <g class="boundary">
            <path d="M291 136L281 212L229 648L226 678"/>
            <path d="M3 625L229 648L505 678"/>
            <path d="M627 136L676 141L797 153"/>
            <path d="M675.5 136V678"/>
          </g>
          <path class="grey" d="M797.5 136V165"/>
          <path class="road" d="M797.5 165L804.5 678"/>
          <!-- right of way -->
          <path class="road" d="M282 194L285 196L316 278L360 380L410 396L419 460L427 513L452 564L544 598L622 678"/>
          <path class="road" d="M281 216L301 268L353 388L401 403L417 516L445 573L538 607L607 678"/>
          <path class="centre" d="M282 196L285 213L356 384L406 400L421 514L448 569L541 602L615 678"/>
          <path class="tri" d="M281 210l3 5h-6zM354 382l3 5h-6zM385 393l3 5h-6zM403 400l3 5h-6zM421 511l3 5h-6zM448 566l3 5h-6zM541 600l3 5h-6z"/>
          <g class="post"><circle cx="677" cy="141" r="2"/><circle cx="229" cy="648" r="2"/></g>

          <g class="note red">
            <text x="284" y="216">Traverse Hub</text>
            <text x="357" y="389">Traverse Hub</text>
            <text x="386" y="400">Traverse Hub</text>
            <text x="404" y="406">Traverse Hub</text>
            <text x="423" y="518">Traverse Hub</text>
            <text x="451" y="573">Traverse Hub</text>
            <text x="543" y="607">Traverse Hub</text>
            <text x="82" y="633" transform="rotate(6 82 633)">S84°02'03"E</text>
            <text x="440" y="671" transform="rotate(6 440 671)">S84°02'03"E</text>
            <text x="718" y="145" transform="rotate(6 718 145)">S84°02'03"E</text>
            <text x="296" y="226" transform="rotate(67 296 226)">S22°44'12"E</text>
            <text x="334" y="319" transform="rotate(67 334 319)">S22°44'12"E</text>
            <text x="375" y="385" transform="rotate(18 375 385)">S72°10'22"E</text>
            <text x="417" y="444" transform="rotate(82 417 444)">S08°14'20"E</text>
            <text x="435" y="528" transform="rotate(62 435 528)">S27°35'14"E</text>
            <text x="488" y="577" transform="rotate(20 488 577)">S70°12'40"E</text>
            <text x="602" y="657" transform="rotate(46 602 657)">S44°20'08"E</text>
            <text x="248" y="482" transform="rotate(-83 248 482)">N06°48'13"E</text>
            <text x="674" y="391" transform="rotate(-90 674 391)">N00°00'03"E</text>
          </g>
          <g class="note green">
            <text x="85" y="637">1501.54m</text>
            <text x="442" y="674" transform="rotate(5 442 674)">1501.54m</text>
            <text x="720" y="149" transform="rotate(5 720 149)">797.60m</text>
            <text x="293" y="229" transform="rotate(67 293 229)">107.62m</text>
            <text x="331" y="323" transform="rotate(67 331 323)">207.23m</text>
            <text x="376" y="389" transform="rotate(18 376 389)">107.62m</text>
            <text x="414" y="446" transform="rotate(82 414 446)">222.67m</text>
            <text x="432" y="532" transform="rotate(62 432 532)">121.09m</text>
            <text x="489" y="582" transform="rotate(20 489 582)">177.31m</text>
            <text x="600" y="661" transform="rotate(46 600 661)">187.20m</text>
            <text x="254" y="480" transform="rotate(-83 254 480)">3241.20m</text>
            <text x="677" y="371" transform="rotate(90 677 371)">1640.22m</text>
          </g>
          <g class="note yellow">
            <text x="677" y="141">100</text><text x="676" y="145">Iron Post</text>
            <text x="230" y="648">100</text><text x="229" y="652">Iron Post</text>
          </g>
          <g class="note cyan"><path d="M281.500 190v7"/><text x="279" y="197">Iron Pin</text></g>
          <path class="cursor" d="M415 401l2-2 4 1v5l-4 1-2-2z"/>

          <!-- ucs icon -->
          <g class="ucs">
            <path d="M26.5 654V608M26.5 594l-5 14h10z" stroke="#1fc238"/>
            <path d="M32 654.5H72M72.5 649.5v10l14-5z" stroke="#a3141b"/>
            <rect x="21.5" y="649.5" width="10" height="10" rx="1"/>
            <text x="26" y="583">Y</text><text x="102" y="659">X</text>
          </g>
        </g>
      </svg>

      <form class="toggles">
        <header>Hot Toggles!<button type="button" aria-label="Close"></button></header>
        <label><input type="checkbox">Point Protection</label>
        <label><input type="checkbox" checked>Log File Output</label>
        <label><input type="checkbox">Input scale</label>
        <label><input type="checkbox">Output scale</label>
        <label><input type="checkbox" checked>Draw lines/curves</label>
        <label><input type="checkbox" checked>Draw distances</label>
        <label><input type="checkbox" checked>Draw bearings</label>
        <label class="field">Next pt: <input type="text" value="64"></label>
        <label class="field">Low pt: <input type="text" value="12" readonly></label>
        <button type="button" class="refresh">Refresh</button>
      </form>
    </main>

    <nav class="layouts">
      <button class="step"><svg viewBox="0 0 8 8"><path d="M1.5 1v6" stroke="#000"/><path d="M6 1v6L2 4z"/></svg></button>
      <button class="step"><svg viewBox="0 0 8 8"><path d="M5 1v6L2 4z"/></svg></button>
      <button class="step"><svg viewBox="0 0 8 8"><path d="M3 1v6l3-3z"/></svg></button>
      <button class="step"><svg viewBox="0 0 8 8"><path d="M2 1v6l4-3z"/><path d="M6.5 1v6" stroke="#000"/></svg></button>
      <svg class="slash" viewBox="0 0 7 10"><path d="M2 0l4 10"/></svg>
      <button class="on">Model</button>
      <svg class="slash" viewBox="0 0 7 10"><path d="M5 0L1 10M3 5l2 5"/></svg>
      <button>Layout1</button>
      <svg class="slash" viewBox="0 0 7 10"><path d="M5 0L1 10M1 0l4 10"/></svg>
      <button>Layout2</button>
      <svg class="slash" viewBox="0 0 7 10"><path d="M6 0L1 10"/></svg>
    </nav>

    <footer class="status">
      <span class="command">Command:</span>
      <span class="coords">37031.118,6066048.777,0.000</span>
      <div class="modes">
        <button>BMP</button>
        <button><svg class="icon"><use href="#b-man"/></svg></button>
        <button>1:1</button>
        <button><svg class="icon"><use href="#b-ann"/></svg></button>
        <button><svg class="icon"><use href="#b-star"/></svg></button>
        <button><svg class="icon"><use href="#b-snap"/></svg></button>
        <button><svg class="icon"><use href="#b-grid"/></svg></button>
        <button><svg class="icon"><use href="#b-ortho"/></svg></button>
        <button><svg class="icon"><use href="#b-polar"/></svg></button>
        <button><svg class="icon"><use href="#b-esnap"/></svg></button>
        <button><svg class="icon"><use href="#b-track"/></svg></button>
        <button><svg class="icon"><use href="#b-cross"/></svg></button>
        <button>MODEL</button>
        <button class="dim">TABLET</button>
        <button class="blue"><svg class="icon"><use href="#gear"/></svg></button>
        <button><svg class="icon"><use href="#b-win"/></svg></button>
        <button><svg class="icon"><use href="#b-clock"/></svg></button>
        <button><svg class="icon"><use href="#b-ok"/></svg></button>
      </div>
    </footer>
  </div>
</body>
</html>
```

FILE: styles.css
```css
* {
  box-sizing: border-box;
}

html, body {
  margin: 0;
  height: 100%;
}

body {
  background: #000;
  padding: 13px 0;
  font-family: "Open Sans", "Noto Sans", sans-serif;
  font-size: 7px;
  line-height: 9px;
  color: #111;
  overflow: hidden;
}

button, select, input {
  font: inherit;
  color: inherit;
  margin: 0;
  padding: 0;
  border: 0;
  background: none;
  white-space: nowrap;
}

select {
  appearance: none;
  min-width: 0;
  opacity: 1;
}

h1, h2 {
  margin: 0;
  font-weight: 500;
}

.sprite {
  position: absolute;
}

.icon {
  display: block;
  flex: none;
  width: 12px;
  height: 12px;
}

.app {
  display: flex;
  flex-direction: column;
  height: 100%;
}

.drop {
  display: inline-block;
  flex: none;
  border: 2px solid transparent;
  border-top: 2px solid #444;
  border-bottom: 0;
}

/* title bar */
.titlebar {
  position: relative;
  display: flex;
  align-items: center;
  flex: none;
  height: 16px;
  padding-left: 34px;
  background: #fff;
}

.orb {
  position: absolute;
  left: 2px;
  top: 1px;
  width: 26px;
  height: 26px;
  border-radius: 50%;
  border: 1px solid #888;
  background: radial-gradient(circle at 50% 30%, #fff, #c9c9c9 60%, #777);
  z-index: 2;
}

.orb svg {
  display: block;
  width: 24px;
  height: 24px;
}

.quick {
  display: flex;
  gap: 3px;
  padding-right: 2px;
}

.quick button {
  width: 12px;
}

.workspace, .layer-pick {
  display: flex;
  align-items: center;
  height: 14px;
  border: 1px solid #aaa;
  border-width: 0 0 1px 1px;
}

.workspace {
  width: 51px;
  padding-left: 1px;
  color: #333;
}

.workspace .icon {
  width: 11px;
  color: #195b96;
}

.workspace select {
  flex: 1;
  padding-left: 1px;
}

.workspace .drop {
  margin-right: 2px;
}

.layer-pick {
  width: 116px;
  border-right: 1px solid #aaa;
  border-radius: 0 7px 7px 0;
  padding: 0 3px 0 1px;
}

.layer-pick select, .combo select {
  flex: 1;
}

.layer-pick .icon, .combo .icon {
  width: 11px;
  height: 11px;
}

.layer-pick select {
  padding-left: 3px;
}

.arrow {
  display: flex;
  align-items: center;
  justify-content: center;
  flex: none;
  width: 9px;
  height: 13px;
  background: #d4d4d8;
  border: 1px solid #bbb;
}

.more {
  display: flex;
  margin-left: 5px;
  padding-top: 1px;
  border-top: 1px solid #444;
}

.titlebar h1 {
  position: absolute;
  left: 0;
  right: 0;
  padding-left: 248px;
  text-align: center;
  font-size: 8px;
  font-weight: 400;
  pointer-events: none;
}

.halo {
  position: absolute;
  left: 50%;
  top: 0;
  width: 26px;
  height: 14px;
  margin-left: -13px;
  border-radius: 0 0 13px 13px;
  background: radial-gradient(circle at 50% 0, #f6f2b8, #f1e67a);
}

.window-buttons {
  display: flex;
  gap: 20px;
  margin-left: auto;
  padding-right: 12px;
}

.window-buttons button, .window-buttons svg {
  display: block;
  width: 10px;
  height: 10px;
}

/* ribbon tabs */
.tabs {
  display: flex;
  align-items: flex-end;
  flex: none;
  height: 12px;
  padding-left: 30px;
  background: #505153;
  color: #f2f2f2;
}

.tabs button {
  height: 11px;
  padding: 0 10px;
  line-height: 11px;
  font-weight: 600;
}

.tabs .active {
  padding: 0 9px;
  border-radius: 2px 2px 0 0;
  background: #e4e5e8;
  color: #111;
}

.ribbon {
  display: flex;
  gap: 2px;
  flex: none;
  height: 61px;
  padding: 2px;
  border-bottom: 1px solid #444;
  border-right: 1px solid #777;
  background: linear-gradient(#d8d8da, #bfc3cd 30%, #e4e6ea 85%, #eceef0);
}

.panel {
  display: flex;
  flex-direction: column;
  flex: none;
  border: 1px solid #a6a8ad;
  border-color: #e8e8ea #a0a2a8 #a0a2a8 #e8e8ea;
  border-radius: 2px;
}

.panel h2 {
  height: 10px;
  font-size: 7px;
  line-height: 10px;
  text-align: center;
  background: linear-gradient(#b4b5b8, #97999c);
}

.tools {
  display: flex;
  flex: 1;
  min-height: 0;
}

.big {
  display: flex;
  flex-direction: column;
  align-items: center;
  flex: 1 1 auto;
  height: 44px;
  line-height: 8px;
  font-weight: 500;
  text-align: center;
}

.big svg {
  flex: none;
  width: 22px;
  height: 22px;
  margin: 1px 0 3px;
}

.big .drop {
  vertical-align: middle;
}

.defaults .big svg, .text .big svg {
  width: 18px;
  height: 18px;
  margin: 4px 0;
}

.small-grid {
  display: grid;
  grid-template-rows: repeat(3, 1fr);
  flex: 1;
  align-items: center;
}

.small-grid button {
  display: flex;
  align-items: center;
  gap: 3px;
  font-weight: 500;
}

.defaults { width: 69px; }
.defaults .small-grid { flex: 0 0 24px; }

.text { width: 67px; }

.leroy { width: 99px; }
.leroy .small-grid {
  grid-template-columns: repeat(4, 23px);
  padding-left: 3px;
}

.labels {
  width: 287px;
  background: linear-gradient(#e2e3e8, #d9dce5 40%, #f2f3f6);
}

.labels .small-grid {
  grid-template-columns: 79px 92px 110px;
  padding-left: 2px;
}

.labels .icon {
  margin-right: -1px;
}

.labels .drop {
  margin: 0 4px 0 auto;
}

.labels h2 {
  background: linear-gradient(#aaabae, #808285);
}

.modify { width: 51px; }
.modify .small-grid { padding-left: 2px; }
.modify .second {
  flex: 0 0 22px;
  margin-bottom: 3px;
  padding-left: 4px;
  border-left: 1px solid #b4b5ba;
}

.tables { width: 40px; }
.tables .small-grid {
  grid-template-columns: 18px 18px;
  padding-left: 2px;
}

.symbols { width: 95px; }
.linetypes { width: 125px; }

/* properties and snaps */
.toolrow {
  flex: none;
  height: 20px;
  padding-top: 1px;
  background: #505153;
}

.toolbar {
  display: flex;
  align-items: center;
  gap: 3px;
  width: max-content;
  height: 19px;
  padding: 0 8px 0 1px;
  border-top: 1px solid #eee;
  border-radius: 0 3px 0 0;
  background: linear-gradient(#dcdde1, #b6bac5);
}

.toolbar button {
  width: 13px;
}

.grip {
  width: 3px;
  height: 13px;
  border-left: 1px dotted #444;
}

.grip.second {
  margin-left: 7px;
}

.layer-tools, .snap-modes {
  display: flex;
  align-items: center;
  gap: 2px;
}

.sep {
  width: 1px;
  height: 11px;
  margin: 0 1px;
  background: #85878e;
}

.combo {
  display: flex;
  align-items: center;
  width: 130px;
  height: 14px;
  padding-left: 3px;
  background: #fff;
  border: 1px solid #ddd;
  font-family: "Liberation Sans", Arial, sans-serif;
  font-size: 8px;
}

.combo select {
  padding-left: 3px;
}

.swatch {
  width: 57px;
  height: 8px;
  border: 1px solid #111;
}

.rule {
  width: 57px;
  height: 1px;
  background: #222;
}

.combo.off {
  width: 64px;
  padding-left: 0;
  background: #c6c7ca;
  color: #77797d;
}

.combo.off select {
  padding-left: 1px;
}

.snaps {
  display: flex;
  justify-content: space-between;
  width: 212px;
}

.toolbar .lit {
  width: 14px;
  height: 14px;
  padding-left: 1px;
  background: #f9dc8c;
}

/* document tabs */
.docs {
  display: flex;
  align-items: flex-start;
  flex: none;
  height: 14px;
  padding: 1px 3px 0 5px;
  background: linear-gradient(#9fa3a9, #c6c9d0);
  border-bottom: 1px solid #777;
}

.doc {
  height: 11px;
  line-height: 11px;
  padding: 0 3px 0 11px;
  color: #fff;
  font-weight: 600;
  background: linear-gradient(135deg, transparent 8px, #505153 8px);
}

.doc.current {
  padding: 0 5px 0 9px;
  background: #f7f7f8;
  color: #111;
  font-weight: 700;
}

.doc span {
  padding-left: 6px;
  font-weight: 400;
}

.docs-menu {
  margin: 0 0 0 auto;
}

/* model space */
.canvas {
  position: relative;
  flex: 1;
  min-height: 0;
  margin: 0 3px;
  background: #000;
  outline: 3px solid #d8d9db;
  clip-path: inset(0 -3px);
}

.drawing {
  display: block;
  width: 100%;
  height: 100%;
}

.drawing path {
  fill: none;
}

.boundary { stroke: #d8141c; }
.road { stroke: #e4e4e4; }
.grey { stroke: #777; }
.centre {
  stroke: #b8121b;
  stroke-dasharray: 16 9;
}
.tri { stroke: #ddd; }
.post {
  fill: #000;
  stroke: #eee;
}

.note {
  font-family: "Liberation Sans", Arial, sans-serif;
  font-size: 4px;
  font-weight: 700;
}

.red { fill: #f01522; }
.green { fill: #16f02a; }
.yellow { fill: #f4ee29; }
.cyan { fill: #25dcdc; }
.cyan path { stroke: #25c7c7; }

.drawing .cursor {
  fill: #fff;
}

.ucs rect {
  fill: none;
  stroke: #ddd;
}

.ucs text {
  fill: #ddd;
  font-size: 14px;
  font-weight: 300;
  text-anchor: middle;
}

.toggles {
  position: absolute;
  top: 2px;
  right: 5px;
  width: 74px;
  padding: 2px;
  background: #f0f0f0;
  font-family: "Liberation Sans", Arial, sans-serif;
  font-size: 8px;
}

.toggles header {
  display: flex;
  align-items: center;
  justify-content: space-between;
  height: 15px;
  padding-left: 3px;
  margin-bottom: 3px;
  color: #999;
}

.toggles header button {
  width: 11px;
  height: 12px;
  background: #ddd;
}

.toggles label {
  display: flex;
  align-items: center;
  height: 10px;
  gap: 2px;
  white-space: nowrap;
  font-size: 7px;
}

.toggles [type="checkbox"] {
  appearance: none;
  flex: none;
  width: 9px;
  height: 9px;
  border: 1px solid #222;
  background: #fff;
}

.toggles [type="checkbox"]:checked {
  background: linear-gradient(45deg, transparent 3px, #333 3px, #333 4px, transparent 4px) 0 2px / 4px 4px no-repeat,
    linear-gradient(135deg, transparent 3px, #333 3px, #333 4px, transparent 4px) 2px 0 / 5px 6px no-repeat, #fff;
}

.toggles .field {
  justify-content: flex-end;
  height: 14px;
}

.field input {
  width: 41px;
  height: 13px;
  padding-left: 2px;
  border: 1px solid #777;
  background: #fff;
  font-size: 8px;
}

.field input[readonly] {
  background: #f0f0f0;
}

.refresh {
  display: block;
  width: 52px;
  height: 10px;
  margin: 3px auto 0;
  border: 1px solid #999;
  background: #e2e2e2;
  line-height: 8px;
}

/* layout tabs */
.layouts {
  display: flex;
  align-items: center;
  flex: none;
  height: 13px;
  padding: 0 0 2px 3px;
  background: #f0f0f0;
  border-bottom: 1px solid #bbb;
}

.step {
  width: 10px;
  height: 10px;
  border-right: 1px solid #999;
}

.step svg {
  display: block;
  width: 8px;
  height: 8px;
  margin: auto;
}

.slash {
  width: 7px;
  height: 10px;
  fill: none;
  stroke: #222;
}

.layouts button:not(.step) {
  padding: 0 3px;
}

.layouts .on {
  font-weight: 700;
}

/* status bar */
.status {
  display: flex;
  align-items: center;
  flex: none;
  height: 16px;
  padding: 0 4px 0 3px;
  background: linear-gradient(#48494d, #2c2d30 60%, #252629);
  color: #f0f0f0;
}

.coords {
  width: 136px;
  margin-left: auto;
  padding-left: 8px;
  border-left: 1px solid #777;
  background: linear-gradient(#777, #777) 5px 0 / 1px 100% no-repeat;
}

.modes {
  display: flex;
  align-items: center;
}

.modes button {
  height: 12px;
  padding: 0 1px;
  border-left: 1px solid #555;
}

.dim {
  color: #77787b;
}

.blue {
  color: #2e97dc;
}
```
